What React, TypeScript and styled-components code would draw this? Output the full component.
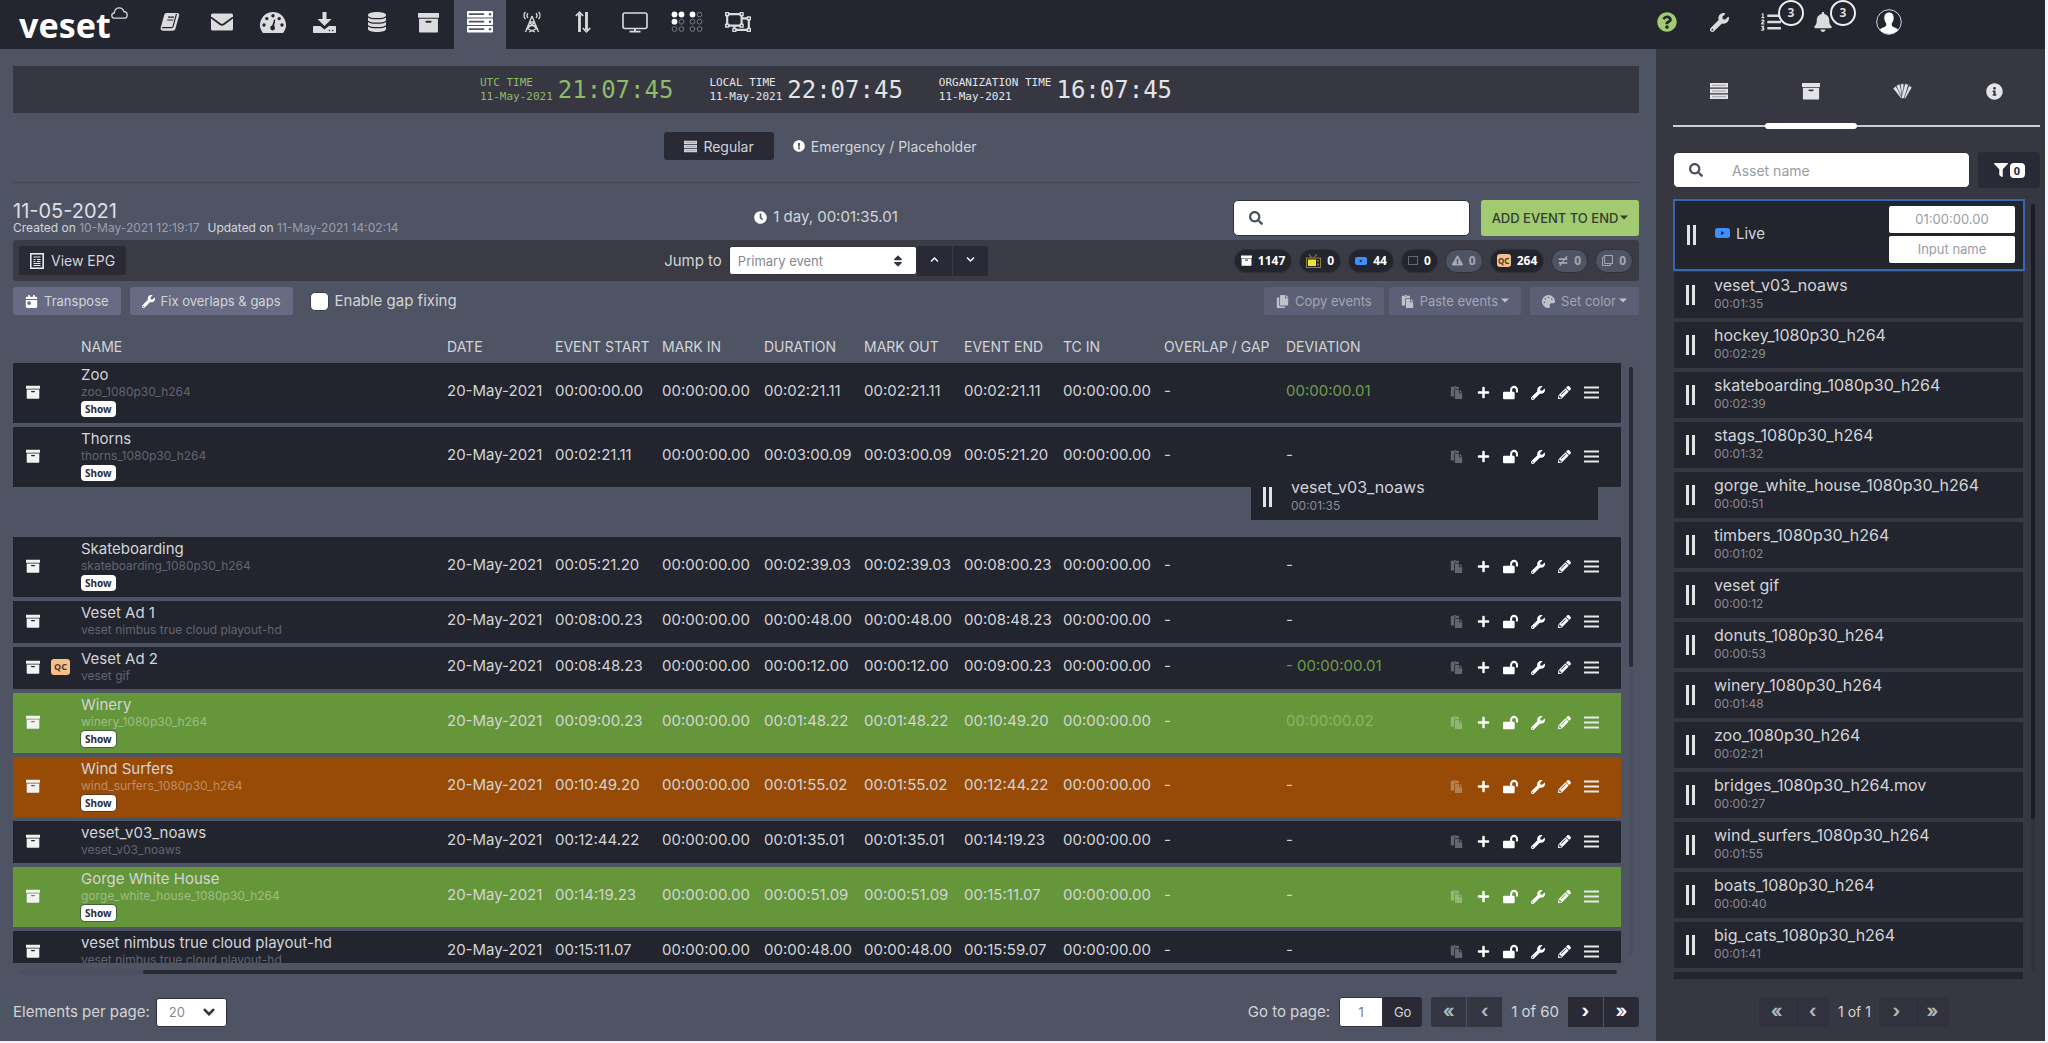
import React from "react";
import styled, { createGlobalStyle, css } from "styled-components";
import {
  FaBell, FaCalendarDay, FaChevronDown, FaChevronUp, FaClock, FaCopy,
  FaExclamationCircle, FaExclamationTriangle, FaFilter, FaInfoCircle, FaListOl, FaLockOpen,
  FaNotEqual, FaPalette, FaPaste, FaPencilAlt, FaPlus, FaQuestionCircle, FaRegClone,
  FaRegObjectUngroup, FaSearch, FaSort, FaWrench,
} from "react-icons/fa";

const sans = `Inter, "Liberation Sans", sans-serif`;
const mono = `"DejaVu Sans Mono", monospace`;

const c = {
  nav: "#23252f", page: "#4f5465", side: "#363741", row: "#22242e", bar: "#3b3b45",
  dark: "#292a36", soft: "#676b84", softOff: "#5c6077", text: "#d3d4d8", muted: "#9a9eab",
  lime: "#a1ca71", green: "#65963a", orange: "#974b06",
};

const Global = createGlobalStyle`
  * { box-sizing: border-box; }
  body { margin: 0; background: #f4f4f7; font-family: ${sans}; color: ${c.text}; }
  button, input, select { font: inherit; color: inherit; margin: 0; }
  button { border: 0; background: none; padding: 0; cursor: pointer; }
  ul { list-style: none; margin: 0; padding: 0; }
  svg { flex: none; display: block; }
`;

/* ---------- icons ---------- */

const BookIcon = () => (
  <svg width="20" height="20" viewBox="0 0 20 20">
    <path fill="currentColor" d="M6.5 1h10.6c1.4 0 2.4 1.2 2 2.6l-3.6 13c-.4 1.4-1.4 2.2-2.8 2.2H3.2C1.2 18.800.2 17 .8 15.200L4.300 2.800C4.600 1.700 5.400 1 6.500 1Z" />
    <path fill="none" stroke={c.nav} strokeWidth="1.200" d="M2 15.700h9.600c.8 0 1.200-.3 1.400-1L16.500 1.800M8 5.200h6M7.200 8h6" />
  </svg>
);
const MailIcon = () => (
  <svg width="22" height="18" viewBox="0 0 22 18">
    <rect width="22" height="17" y=".5" rx="1.500" fill="currentColor" />
    <path fill="none" stroke={c.nav} strokeWidth="1.800" d="M0 4.500 9.300 11.300c1.100.8 2.300.8 3.400 0L22 4.500" />
  </svg>
);
const GaugeIcon = () => (
  <svg width="26" height="21" viewBox="0 0 26 21">
    <path fill="currentColor" d="M13 0a13 13 0 0 0-10.700 20.300c.2.400.6.700 1.100.7h19.200c.5 0 .9-.3 1.100-.7A13 13 0 0 0 13 0Z" />
    <g fill={c.nav}>
      <circle cx="4" cy="13" r="1.700" /><circle cx="6.800" cy="6.600" r="1.700" /><circle cx="13" cy="3.800" r="1.700" />
      <circle cx="19.200" cy="6.600" r="1.700" /><circle cx="22" cy="13" r="1.700" /><circle cx="12.600" cy="16" r="2.400" />
      <path d="M14.100 7.500 15.400 7.800 13.800 15.500 11.800 15Z" />
    </g>
  </svg>
);
const DownloadIcon = () => (
  <svg width="23" height="22" viewBox="0 0 23 22">
    <g fill="currentColor"><path d="M9.500 1h4v7h5l-7 7-7-7h5Z" /><path d="M1 15h6.200l4.300 3.500 4.300-3.500H22c.6 0 1 .4 1 1v5c0 .6-.4 1-1 1H1c-.6 0-1-.4-1-1v-5c0-.6.4-1 1-1Z" /></g>
    <g fill={c.nav}><circle cx="16.500" cy="19.500" r=".8" /><circle cx="19.800" cy="19.500" r=".8" /></g>
  </svg>
);
const DatabaseIcon = () => (
  <svg width="18" height="20" viewBox="0 0 18 20">
    <path fill="currentColor" d="M0 3C0 1 4 0 9 0s9 1 9 3v14c0 2-4 3-9 3s-9-1-9-3Z" />
    <path fill="none" stroke={c.nav} strokeWidth="1.300" d="M0 4.500c1 1.700 5 2.200 9 2.200s8-.5 9-2.200M0 9c1 1.700 5 2.200 9 2.200s8-.5 9-2.200M0 13.500c1 1.700 5 2.200 9 2.200s8-.5 9-2.200" />
  </svg>
);
const BoxIcon = ({ size = 15, line = c.row }: { size?: number; line?: string }) => (
  <svg width={size} height={size} viewBox="0 0 20 20">
    <path fill="currentColor" d="M0 1h20v4.500H0zM1 6.500h18V18.500c0 .6-.4 1-1 1H2c-.6 0-1-.4-1-1Z" />
    <path d="M8 9.300h4" stroke={line} strokeWidth="1.800" strokeLinecap="round" />
  </svg>
);
const RackIcon = ({ slot = c.page }: { slot?: string }) => (
  <svg width="26" height="22" viewBox="0 0 26 22">
    {[0, 7.500, 15].map((y) => (
      <g key={y}>
        <rect y={y} width="26" height="6.500" rx=".8" fill="#fff" />
        <path d={`M2.500 ${y + 3.200}h14`} stroke={slot} strokeWidth="1.800" strokeLinecap="round" />
        <circle cx="23" cy={y + 3.200} r="1.200" fill={slot} />
      </g>
    ))}
  </svg>
);
const StackIcon = ({ w = 13 }: { w?: number }) => (
  <svg width={w} height={w} viewBox="0 0 18 16">
    <path fill="currentColor" d="M0 0h18v4.500H0zM0 5.700h18v4.600H0zM0 11.500h18V16H0z" />
    <path stroke={c.side} strokeWidth=".8" opacity=".5" d="M2 2.300h14M2 8h14M2 13.700h14" />
  </svg>
);
const TowerIcon = () => (
  <svg width="18" height="22" viewBox="0 0 18 22" fill="none" stroke="currentColor" strokeWidth="1.300">
    <path d="M9 5 2.500 21M9 5l6.500 16M7 11h4M5.500 14.500h7M11.500 11.500 4.300 17.500M6.500 11.500l7.200 6M4 17.500 12 21M14 17.500 6 21" />
    <path d="M2.500 1C.5 3 .5 6 2.500 8M5 2.200c-1.200 1.300-1.200 3.400 0 4.700M15.500 1c2 2 2 5 0 7M13 2.200c1.200 1.300 1.200 3.400 0 4.700" />
  </svg>
);
const SwapIcon = () => (
  <svg width="16" height="22" viewBox="0 0 16 22" fill="none" stroke="currentColor">
    <path strokeWidth="2.800" d="M4.500 3v18M11.500 1v18" /><path strokeWidth="1.600" d="M.8 5 4.500 1.200 8.200 5M7.800 17l3.700 3.800 3.700-3.800" />
  </svg>
);
const MonitorIcon = () => (
  <svg width="26" height="21" viewBox="0 0 26 21" fill="none" stroke="currentColor">
    <rect x="1" y="1" width="24" height="15.500" rx="2" strokeWidth="1.600" />
    <path strokeWidth="1.800" d="M13 16.500V19M7.500 19.600h11" />
  </svg>
);
const BrailleIcon = () => (
  <svg width="32" height="22" viewBox="0 0 32 22">
    {[3.500, 10.500, 21.500, 28.500].map((x, col) =>
      [3.500, 10.700, 18].map((y, row) => {
        const on = (row === 0 && col < 3) || (row === 1 && col === 0);
        return <circle key={`${x}-${y}`} cx={x} cy={y} r={on ? 2.900 : 2.400} fill={on ? "#fff" : "none"} stroke={on ? "none" : "#777982"} strokeWidth="1" />;
      })
    )}
  </svg>
);
const AvatarIcon = () => (
  <svg width="26" height="26" viewBox="0 0 26 26">
    <circle cx="13" cy="13" r="12.300" fill={c.nav} stroke="#d8d8dc" strokeWidth="1" />
    <path fill="#fff" d="M13 3.500c3 0 4.700 2.200 4.700 5.300 0 2.600-.9 4.300-1.900 5.400v2.300c.6 1.800 4.500 1.900 6.400 4.200a12 12 0 0 1-18.400 0c1.900-2.300 5.800-2.400 6.400-4.200v-2.300c-1-1.100-1.900-2.800-1.900-5.400 0-3.100 1.700-5.300 4.700-5.300Z" />
  </svg>
);
const CloudIcon = () => (
  <svg width="17" height="12" viewBox="0 0 17 12" fill="none" stroke="#d5d5da" strokeWidth="1.300">
    <path d="M4 11.200C1.900 11.200.8 9.900.8 8.500c0-1.500 1.200-2.400 2.500-2.500C3.500 2.500 6 .8 8.300.8c2.400 0 3.900 1.500 4.500 3.700 2 .2 3.400 1.600 3.400 3.400 0 1.900-1.400 3.300-3.300 3.300Z" />
  </svg>
);
const SwatchIcon = () => (
  <svg width="19" height="16" viewBox="0 0 19 16">
    <g fill="currentColor" stroke={c.side} strokeWidth=".6">
      <path d="M0 5.500 2.800 3 10 13.500 8 15.500Z" />
      <path d="M3.200 2.800 6.500.8 10.500 12 8.500 14Z" />
      <path d="M7.300 1 10.800.5 11 12 9 14Z" />
      <path d="M12 .5 15.500 1.500 11.500 15.500 8 15.500Z" />
      <path d="M16 2.500 19 4.300 12.500 15.500 11 15Z" />
    </g>
  </svg>
);
const TvIcon = () => (
  <svg width="15" height="14" viewBox="0 0 15 14" fill="none">
    <path stroke="#a39a35" d="m3 0 2.500 3.500M11 0 8 3.500" /><rect x=".5" y="4" width="14" height="9.500" stroke="#8d8431" />
    <path fill="#f5de3b" d="M2 5.500h8v6.500H2z" /><path stroke="#d5c53a" d="M12 6v1.500M12 9.500v2" />
  </svg>
);
const PlayIcon = ({ w = 15 }: { w?: number }) => (
  <svg width={w} height={(w * 10) / 15} viewBox="0 0 15 10"><rect width="15" height="10" rx="2.500" fill="#3f8efb" /><path fill={c.row} d="m6 3 3.500 2L6 7Z" /></svg>
);
const FrameIcon = () => (
  <svg width="10" height="9" viewBox="0 0 10 9"><rect x=".5" y=".5" width="9" height="8" fill="none" stroke="#666872" /></svg>
);
const EpgIcon = () => (
  <svg width="14" height="16" viewBox="0 0 14 16" fill="none" stroke="#e8e8ea">
    <rect x=".8" y=".8" width="12.400" height="14.400" strokeWidth="1.600" /><path d="M3.500 4h7M3.500 6.500h2M7 6.500h3.500M7 8.500h3.500M3.500 8.500h2M3.500 10.500h7M3.500 12.500h7" />
  </svg>
);
const MenuIcon = () => (
  <svg width="15" height="13" viewBox="0 0 15 13"><path stroke="#e9e9ec" strokeWidth="2.200" d="M0 1.500h15M0 6.500h15M0 11.500h15" /></svg>
);
const ChevronIcon = () => (
  <svg width="12" height="8" viewBox="0 0 12 8"><path fill="none" stroke="#33343f" strokeWidth="2.600" d="m1 1.200 5 5 5-5" /></svg>
);
const Caret = () => (
  <svg width="8" height="6" viewBox="0 0 8 6"><path fill="currentColor" d="M0 .5h8L4 4.500Z" /></svg>
);

/* ---------- header ---------- */

const Shell = styled.div`
  height: 100vh; display: flex; flex-direction: column;
  padding: 0 3px 2px 0;
`;
const TopBar = styled.header`
  flex: none; height: 49px; background: ${c.nav}; display: flex; justify-content: space-between;
`;
const Brand = styled.a`
  width: 144px; padding-left: 19px; display: flex; align-items: flex-start;
  font: 700 34px/50px "Noto Sans", sans-serif; color: #fff; text-decoration: none;
  svg { margin-top: 7px; }
`;
const Nav = styled.nav`display: flex; width: 620px; color: #dcdcde;`;
const NavItem = styled.button<{ $on?: boolean }>`
  flex: 1; display: grid; place-items: center; padding-bottom: 5px;
  background: ${(p) => (p.$on ? c.page : "transparent")};
`;
const UserTools = styled.div`display: flex; align-items: flex-start; padding: 6px 116px 0 0; color: #dcdcde;`;
const Tool = styled.button<{ $w: number; $color?: string }>`
  position: relative; width: ${(p) => p.$w}px; height: 32px; display: grid; place-items: center;
  color: ${(p) => p.$color || "inherit"};
`;
const Count = styled.span`
  position: absolute; left: 50%; top: -6px; margin-left: 7px; width: 26px; height: 26px; border: 2px solid #eee;
  border-radius: 50%; background: ${c.nav}; font: 700 12px/22px "Noto Sans", sans-serif; text-align: center;
`;

/* ---------- main ---------- */

const Body = styled.div`flex: 1; min-height: 0; display: grid; grid-template-columns: minmax(0, 1fr) 389px;`;
const Main = styled.main`
  background: ${c.page}; padding: 17px 17px 14px 13px; min-height: 0; display: flex; flex-direction: column;
`;
const Clocks = styled.section`
  flex: none; height: 47px; background: ${c.side}; display: flex; justify-content: center; align-items: center; gap: 36px;
  font-family: ${mono};
`;
const Clock = styled.div<{ $utc?: boolean }>`
  display: flex; align-items: center; gap: 5px; color: ${(p) => (p.$utc ? "#8dbb66" : "#e4e4e6")};
`;
const ClockLabel = styled.span`font-size: 11px; line-height: 14px;`;
const ClockTime = styled.time`font-size: 24px; line-height: 28px;`;
const Modes = styled.div`display: flex; justify-content: center; gap: 8px; margin: 19px 0 22px;`;
const Mode = styled.button<{ $on?: boolean }>`
  height: 28px; padding: 0 ${(p) => (p.$on ? 20 : 11)}px; border-radius: 3px; display: flex; align-items: center; gap: 6px; font-size: 14px;
  background: ${(p) => (p.$on ? c.dark : "transparent")};
`;
const Head = styled.section`
  flex: none; border-top: 1px solid #434654; padding-top: 17px; display: grid; height: 58px;
  grid-template-columns: 1fr auto 1fr; align-items: start;
`;
const Title = styled.h1`margin: 0; font-size: 20px; font-weight: 400; line-height: 22px; color: #dedfe2;`;
const Meta = styled.p`margin: 0; font-size: 12px; line-height: 12px; color: ${c.text};`;
const MetaItem = styled.span`margin-right: 8px; color: ${c.muted};`;
const Total = styled.div`display: flex; align-items: center; gap: 6px; font-size: 15px; line-height: 34px; svg { color: #fff; }`;
const HeadTools = styled.div`display: flex; justify-content: flex-end; gap: 11px;`;
const SearchBox = styled.label<{ $w?: number }>`
  ${(p) => (p.$w ? `width: ${p.$w}px;` : "flex: 1;")} height: 36px; background: #fff; border: 1px solid #2f303b; border-radius: 5px;
  display: flex; align-items: center; padding-left: 15px; gap: 27px; color: #4b505f;
  input { flex: 1; min-width: 0; border: 0; outline: 0; background: none; font-size: 14px; }
  input::placeholder { color: #999ca5; }
`;
const AddButton = styled.button`
  height: 36px; width: 158px; border-radius: 3px; background: ${c.lime}; color: #333d2c; font-size: 13px; font-weight: 500;
  display: flex; align-items: center; justify-content: center; gap: 2px; white-space: nowrap;
`;
const Bar = styled.section`
  flex: none; height: 41px; margin-bottom: 6px; padding: 0 6px; background: ${c.bar}; border-radius: 4px;
  display: grid; grid-template-columns: 1fr auto 1fr; align-items: center;
`;
const DarkButton = styled.button`
  justify-self: start; height: 29px; padding: 0 11px; border-radius: 3px; background: ${c.dark}; font-size: 14px;
  display: flex; align-items: center; gap: 7px;
`;
const Jump = styled.div`display: flex; align-items: center; font-size: 15px; label { margin-right: 7px; }`;
const SelectWrap = styled.span<{ $w: number; $left: number }>`
  position: relative; width: ${(p) => p.$w}px; height: 29px; display: block;
  select {
    appearance: none; width: 100%; height: 100%; background: #fff; color: #858893; border: 1px solid #2f303b;
    border-radius: 3px; font-size: 13px; padding: 0 0 0 ${(p) => p.$left}px; outline: 0;
  }
  svg { position: absolute; right: 12px; top: 50%; transform: translateY(-50%); color: #33343f; pointer-events: none; }
`;
const Steps = styled.div`display: flex; gap: 1px;`;
const Step = styled.button<{ $off?: boolean; $first?: boolean; $last?: boolean }>`
  width: 35px; height: 30px; background: ${(p) => (p.$off ? "#343642" : c.dark)}; color: ${(p) => (p.$off ? "#b4b5bc" : "#fff")};
  display: grid; place-items: center; font: 700 18px/20px ${sans}; padding-bottom: 2px;
  border-radius: ${(p) => (p.$first ? "3px 0 0 3px" : p.$last ? "0 3px 3px 0" : "0")};
`;
const Badges = styled.div`display: flex; justify-content: flex-end; gap: 7px;`;
const Badge = styled.span<{ $off?: boolean }>`
  height: 24px; padding: 0 6px; border-radius: 12px; display: flex; align-items: center; gap: 6px;
  background: ${(p) => (p.$off ? c.page : c.row)}; color: ${(p) => (p.$off ? "#a4a8b4" : "#fff")};
  border: 1px solid #303139; font: 700 12px/22px "Noto Sans", sans-serif;
`;
const Qc = styled.span<{ $small?: boolean }>`
  height: ${(p) => (p.$small ? 13 : 16)}px; width: ${(p) => (p.$small ? 14 : 19)}px; border-radius: 3px; background: #f9bf88; color: #4a3a2e;
  font: 700 ${(p) => (p.$small ? 8 : 9)}px/14px "Noto Sans", sans-serif; display: grid; place-items: center;
`;
const Actions = styled.section`flex: none; display: flex; align-items: center; gap: 9px; height: 28px; margin-bottom: 4px;`;
const ButtonPair = styled.div`display: flex; gap: 5px;`;
const SoftButton = styled.button<{ $off?: boolean }>`
  height: 28px; padding: 0 12px; border-radius: 3px; display: flex; align-items: center; gap: 6px; font-size: 13px; white-space: nowrap;
  background: ${(p) => (p.$off ? c.softOff : c.soft)}; color: ${(p) => (p.$off ? "#a3a6b4" : c.text)};
  > svg { color: ${(p) => (p.$off ? "#c0c2cb" : "#fff")}; }
  > svg + svg, > span + svg { margin-left: 0; }
`;
const WithCaret = styled.span`display: flex; align-items: center; gap: 3px; svg { color: #c0c2cb; }`;
const CheckLabel = styled.label`
  display: flex; align-items: center; gap: 6px; margin: 0 auto 0 8px; font-size: 15px; line-height: 18px;
  input { appearance: none; width: 19px; height: 19px; background: #fff; border: 1px solid #3a3c49; border-radius: 5px; }
`;

/* ---------- events ---------- */

const Viewport = styled.div`flex: 1; min-height: 0; display: flex;`;
const Scroller = styled.div`flex: 1; min-width: 0; overflow: hidden; position: relative;`;
const VRail = styled.div`width: 18px; padding: 48px 0 8px 8px; display: flex;`;
const VTrack = styled.div`width: 4px; background: #4b4f60; span { display: block; height: 51%; border-radius: 2px; background: #282a34; }`;
const HTrack = styled.div`
  flex: none; margin: 7px 22px 23px 7px; height: 4px; background: #4b4f5f;
  span { display: block; height: 4px; margin-left: 123px; border-radius: 2px; background: #282a34; }
`;
const Table = styled.table`
  width: 100%; table-layout: fixed; border-collapse: separate; border-spacing: 0 4px; font-size: 15px;
  th { height: 36px; padding: 10px 0 0; text-align: left; font-size: 14px; font-weight: 400; white-space: nowrap; color: ${c.text}; }
  td { padding: 0 0 5px; white-space: nowrap; }
`;
const rowTone = { dark: c.row, green: c.green, orange: c.orange };
type Tone = keyof typeof rowTone;
const Row = styled.tr<{ $tone: Tone }>`background: ${(p) => rowTone[p.$tone]};`;
const Spacer = styled.tr`height: 42px;`;
const Marks = styled.div`display: flex; align-items: center; gap: 11px; padding: 3px 0 0 13px; color: #f2f2f2;`;
const NameCell = styled.td`&& { padding: 4px 0 5px; vertical-align: top; }`;
const Name = styled.div`line-height: 16px;`;
const File = styled.div<{ $tone: Tone }>`
  font-size: 12px; line-height: 17px; color: ${(p) => (p.$tone === "dark" ? "#62646e" : "rgba(255,255,255,.38)")};
`;
const Show = styled.button`
  display: block; margin: 1px 0; height: 16px; padding: 0 4px; border-radius: 4px; background: #fff; color: #2a2b36;
  box-shadow: 0 0 0 1px rgba(40, 42, 52, .5);
  font: 700 10px/16px "Noto Sans", sans-serif;
`;
const Deviation = styled.span<{ $tone: Tone }>`color: ${(p) => (p.$tone === "dark" ? "#6f9d4b" : "#8db465")};`;
const RowTools = styled.div`display: flex; color: #fff; padding-top: 4px;`;
const RowTool = styled.button<{ $off?: boolean }>`
  width: 27px; height: 20px; display: grid; place-items: center; opacity: ${(p) => (p.$off ? 0.3 : 1)};
`;

const Foot = styled.footer`flex: none; height: 30px; display: flex; align-items: center; font-size: 15px; gap: 6px;`;
const FootText = styled.span`padding-bottom: 2px;`;
const Push = styled.div`margin-left: auto; display: flex; align-items: center; gap: 9px;`;
const PageInput = styled.input`
  width: 44px; height: 30px; border: 1px solid #2f303b; border-radius: 3px 0 0 3px; background: #fff; text-align: center; font-size: 13px;
  && { color: #777a85; }
`;
const Go = styled.button`width: 39px; height: 30px; background: ${c.dark}; border-radius: 0 3px 3px 0; font-size: 13px;`;
const Group = styled.div`display: flex;`;

/* ---------- sidebar ---------- */

const Side = styled.aside`
  background: ${c.side}; min-height: 0; padding: 0 5px 14px 17px; display: flex; flex-direction: column;
`;
const SideTabs = styled.div`
  flex: none; height: 78px; margin-bottom: 25px; display: grid; grid-template-columns: repeat(4, 1fr); border-bottom: 2px solid #cfcfd3;
`;
const SideTab = styled.button<{ $on?: boolean }>`
  position: relative; display: grid; place-items: center; padding-top: 8px; color: #e4e4e8;
  ${(p) => p.$on && css`&::after { content: ""; position: absolute; left: 0; right: 0; bottom: -4px; height: 6px; border-radius: 3px; background: #fff; }`}
`;
const SideSearch = styled.div`flex: none; display: flex; gap: 8px; margin-bottom: 11px;`;
const FilterButton = styled.button`
  width: 62px; height: 36px; border-radius: 4px; background: ${c.dark}; color: #fff; display: flex; align-items: center; justify-content: center; gap: 2px;
  span { width: 15px; height: 15px; border-radius: 4px; background: #fff; color: #2a2b36; font: 700 11px/15px "Noto Sans", sans-serif; }
`;
const AssetArea = styled.div`flex: 1; min-height: 0; display: flex; gap: 6px;`;
const AssetList = styled.ul`flex: 1; min-width: 0; overflow: hidden; display: flex; flex-direction: column;`;
const SideRail = styled.div`width: 4px; margin: 5px 5px 6px 0; background: #32333d; span { display: block; height: 80%; border-radius: 2px; background: #1b1c25; }`;
const assetBox = css`flex: none; height: 46px; background: ${c.row}; display: flex; align-items: center; padding-left: 12px; gap: 19px;`;
const Asset = styled.li`${assetBox} margin: 0 2px 4px 1px;`;
const Grip = styled.span`width: 9px; height: 20px; border: solid #e3e3e6; border-width: 0 3px;`;
const AssetName = styled.div`font-size: 16px; line-height: 18px;`;
const AssetTime = styled.div`font-size: 12px; line-height: 20px; color: #8a8c95;`;
const Live = styled.li`
  flex: none; height: 72px; margin-bottom: 1px; border: 2px solid #3668ab; background: ${c.row}; display: flex; align-items: center;
  padding: 0 8px 0 12px; gap: 19px; font-size: 15px;
`;
const LiveName = styled.div`display: flex; align-items: center; gap: 6px; flex: 1; padding-bottom: 4px;`;
const LiveFields = styled.div`
  width: 126px; display: grid; gap: 3px; margin-bottom: 2px;
  input { width: 100%; height: 27px; border: 0; border-radius: 2px; background: #fff; text-align: center; font-size: 13px; }
  input::placeholder { color: #9b9da6; }
`;
const Dragged = styled.div`${assetBox} position: absolute; right: 23px; top: 155px; width: 347px;`;
const SideFoot = styled.div`
  flex: none; height: 30px; margin: 18px 4px 0 0; display: flex; justify-content: center; align-items: center; gap: 8px; font-size: 14px;
  ${Step} { background: #31323d; }
`;

/* ---------- data ---------- */

const columns = ["NAME", "DATE", "EVENT START", "MARK IN", "DURATION", "MARK OUT", "EVENT END", "TC IN", "OVERLAP / GAP", "DEVIATION"];
const widths = [108, 107, 102, 100, 100, 99, 101, 122, 157, 178];

type Event = { name: string; file: string; start: string; dur: string; end: string; dev?: string; show?: boolean; qc?: boolean; tone?: Tone };
const before: Event[] = [
  { name: "Zoo", file: "zoo_1080p30_h264", start: "00:00:00.00", dur: "00:02:21.11", end: "00:02:21.11", dev: "00:00:00.01", show: true },
  { name: "Thorns", file: "thorns_1080p30_h264", start: "00:02:21.11", dur: "00:03:00.09", end: "00:05:21.20", show: true },
];
const after: Event[] = [
  { name: "Skateboarding", file: "skateboarding_1080p30_h264", start: "00:05:21.20", dur: "00:02:39.03", end: "00:08:00.23", show: true },
  { name: "Veset Ad 1", file: "veset nimbus true cloud playout-hd", start: "00:08:00.23", dur: "00:00:48.00", end: "00:08:48.23" },
  { name: "Veset Ad 2", file: "veset gif", start: "00:08:48.23", dur: "00:00:12.00", end: "00:09:00.23", dev: "- 00:00:00.01", qc: true },
  { name: "Winery", file: "winery_1080p30_h264", start: "00:09:00.23", dur: "00:01:48.22", end: "00:10:49.20", dev: "00:00:00.02", show: true, tone: "green" },
  { name: "Wind Surfers", file: "wind_surfers_1080p30_h264", start: "00:10:49.20", dur: "00:01:55.02", end: "00:12:44.22", show: true, tone: "orange" },
  { name: "veset_v03_noaws", file: "veset_v03_noaws", start: "00:12:44.22", dur: "00:01:35.01", end: "00:14:19.23" },
  { name: "Gorge White House", file: "gorge_white_house_1080p30_h264", start: "00:14:19.23", dur: "00:00:51.09", end: "00:15:11.07", show: true, tone: "green" },
  { name: "veset nimbus true cloud playout-hd", file: "veset nimbus true cloud playout-hd", start: "00:15:11.07", dur: "00:00:48.00", end: "00:15:59.07" },
];
const assets = [
  ["veset_v03_noaws", "00:01:35"], ["hockey_1080p30_h264", "00:02:29"], ["skateboarding_1080p30_h264", "00:02:39"],
  ["stags_1080p30_h264", "00:01:32"], ["gorge_white_house_1080p30_h264", "00:00:51"], ["timbers_1080p30_h264", "00:01:02"],
  ["veset gif", "00:00:12"], ["donuts_1080p30_h264", "00:00:53"], ["winery_1080p30_h264", "00:01:48"], ["zoo_1080p30_h264", "00:02:21"],
  ["bridges_1080p30_h264.mov", "00:00:27"], ["wind_surfers_1080p30_h264", "00:01:55"], ["boats_1080p30_h264", "00:00:40"],
  ["big_cats_1080p30_h264", "00:01:41"],
];
const navItems = [
  ["Catalogue", <BookIcon />], ["Messages", <MailIcon />], ["Dashboard", <GaugeIcon />], ["Downloads", <DownloadIcon />],
  ["Storage", <DatabaseIcon />], ["Assets", <BoxIcon size={21} line={c.nav} />], ["Playlists", <RackIcon />], ["Channels", <TowerIcon />],
  ["Transfers", <SwapIcon />], ["Monitoring", <MonitorIcon />], ["Matrix", <BrailleIcon />], ["Graphics", <FaRegObjectUngroup size={26} />],
] as [string, React.ReactNode][];

const EventRow = ({ e }: { e: Event }) => {
  const tone = e.tone || "dark";
  return (
    <Row $tone={tone}>
      <td><Marks><BoxIcon size={14} line={rowTone[tone]} />{e.qc && <Qc>QC</Qc>}</Marks></td>
      <NameCell>
        <Name>{e.name}</Name>
        <File $tone={tone}>{e.file}</File>
        {e.show && <Show>Show</Show>}
      </NameCell>
      <td>20-May-2021</td><td>{e.start}</td><td>00:00:00.00</td><td>{e.dur}</td><td>{e.dur}</td><td>{e.end}</td><td>00:00:00.00</td>
      <td>-</td>
      <td>{e.dev ? <Deviation $tone={tone}>{e.dev}</Deviation> : "-"}</td>
      <td>
        <RowTools>
          <RowTool $off aria-label="Paste"><FaPaste size={13} /></RowTool>
          <RowTool aria-label="Add"><FaPlus size={13} /></RowTool>
          <RowTool aria-label="Unlock"><FaLockOpen size={15} /></RowTool>
          <RowTool aria-label="Settings"><FaWrench size={14} /></RowTool>
          <RowTool aria-label="Edit"><FaPencilAlt size={13} /></RowTool>
          <RowTool aria-label="Menu"><MenuIcon /></RowTool>
        </RowTools>
      </td>
    </Row>
  );
};

export default function App() {
  return (
    <Shell>
      <Global />
      <TopBar>
        <Group>
          <Brand href="#">veset<CloudIcon /></Brand>
          <Nav>
            {navItems.map(([label, icon]) => (
              <NavItem key={label} aria-label={label} $on={label === "Playlists"}>{icon}</NavItem>
            ))}
          </Nav>
        </Group>
        <UserTools>
          <Tool $w={52} $color={c.lime} aria-label="Help"><FaQuestionCircle size={20} /></Tool>
          <Tool $w={52} aria-label="Tools"><FaWrench size={19} /></Tool>
          <Tool $w={52} aria-label="Tasks"><FaListOl size={20} /><Count>3</Count></Tool>
          <Tool $w={52} aria-label="Notifications"><FaBell size={20} /><Count>3</Count></Tool>
          <Tool $w={80} aria-label="Account"><AvatarIcon /></Tool>
        </UserTools>
      </TopBar>

      <Body>
        <Main>
          <Clocks>
            <Clock $utc><ClockLabel>UTC TIME<br />11-May-2021</ClockLabel><ClockTime>21:07:45</ClockTime></Clock>
            <Clock><ClockLabel>LOCAL TIME<br />11-May-2021</ClockLabel><ClockTime>22:07:45</ClockTime></Clock>
            <Clock><ClockLabel>ORGANIZATION TIME<br />11-May-2021</ClockLabel><ClockTime>16:07:45</ClockTime></Clock>
          </Clocks>
          <Modes>
            <Mode $on><StackIcon />Regular</Mode>
            <Mode><FaExclamationCircle size={12} color="#fff" />Emergency / Placeholder</Mode>
          </Modes>

          <Head>
            <div>
              <Title>11-05-2021</Title>
              <Meta>
                Created on <MetaItem>10-May-2021 12:19:17</MetaItem>
                Updated on <MetaItem>11-May-2021 14:02:14</MetaItem>
              </Meta>
            </div>
            <Total><FaClock size={13} />1 day, 00:01:35.01</Total>
            <HeadTools>
              <SearchBox $w={237}><FaSearch size={14} /><input aria-label="Search events" /></SearchBox>
              <AddButton>ADD EVENT TO END<Caret /></AddButton>
            </HeadTools>
          </Head>

          <Bar>
            <DarkButton><EpgIcon />View EPG</DarkButton>
            <Jump>
              <label htmlFor="jump">Jump to</label>
              <SelectWrap $w={188} $left={8}><select id="jump"><option>Primary event</option></select><FaSort size={14} /></SelectWrap>
              <Steps>
                <Step aria-label="Previous"><FaChevronUp size={9} /></Step>
                <Step $last aria-label="Next"><FaChevronDown size={9} /></Step>
              </Steps>
            </Jump>
            <Badges>
              <Badge><BoxIcon size={11} />1147</Badge>
              <Badge><TvIcon />0</Badge>
              <Badge><PlayIcon w={12} />44</Badge>
              <Badge><FrameIcon />0</Badge>
              <Badge $off><FaExclamationTriangle size={11} />0</Badge>
              <Badge><Qc $small>QC</Qc>264</Badge>
              <Badge $off><FaNotEqual size={10} />0</Badge>
              <Badge $off><FaRegClone size={11} />0</Badge>
            </Badges>
          </Bar>

          <Actions>
            <SoftButton><FaCalendarDay size={13} />Transpose</SoftButton>
            <SoftButton><FaWrench size={13} />Fix overlaps &amp; gaps</SoftButton>
            <CheckLabel><input type="checkbox" />Enable gap fixing</CheckLabel>
            <ButtonPair>
              <SoftButton $off><FaCopy size={13} />Copy events</SoftButton>
              <SoftButton $off><FaPaste size={13} /><WithCaret>Paste events<Caret /></WithCaret></SoftButton>
            </ButtonPair>
            <SoftButton $off><FaPalette size={13} /><WithCaret>Set color<Caret /></WithCaret></SoftButton>
          </Actions>

          <Viewport>
            <Scroller>
              <Table>
                <colgroup>
                  <col style={{ width: 68 }} /><col />
                  {widths.map((w, i) => <col key={i} style={{ width: w }} />)}
                </colgroup>
                <thead><tr><th />{columns.map((h) => <th key={h}>{h}</th>)}<th /></tr></thead>
                <tbody>
                  {before.map((e) => <EventRow key={e.start} e={e} />)}
                  <Spacer><td colSpan={12} /></Spacer>
                  {after.map((e) => <EventRow key={e.start} e={e} />)}
                </tbody>
              </Table>
              <Dragged><Grip /><div><AssetName>veset_v03_noaws</AssetName><AssetTime>00:01:35</AssetTime></div></Dragged>
            </Scroller>
            <VRail><VTrack><span /></VTrack></VRail>
          </Viewport>
          <HTrack><span /></HTrack>

          <Foot>
            <FootText as="label" htmlFor="per-page">Elements per page:</FootText>
            <SelectWrap $w={71} $left={12}><select id="per-page"><option>20</option></select><ChevronIcon /></SelectWrap>
            <Push>
              <FootText as="label" htmlFor="page">Go to page:</FootText>
              <Group><PageInput id="page" defaultValue="1" /><Go>Go</Go></Group>
              <Steps><Step $off $first aria-label="First">«</Step><Step $off aria-label="Previous page">‹</Step></Steps>
              <FootText>1 of 60</FootText>
              <Steps><Step aria-label="Next page">›</Step><Step $last aria-label="Last">»</Step></Steps>
            </Push>
          </Foot>
        </Main>

        <Side>
          <SideTabs>
            <SideTab aria-label="Playlist"><StackIcon w={18} /></SideTab>
            <SideTab $on aria-label="Assets"><BoxIcon size={18} line={c.side} /></SideTab>
            <SideTab aria-label="Graphics"><SwatchIcon /></SideTab>
            <SideTab aria-label="Info"><FaInfoCircle size={17} /></SideTab>
          </SideTabs>
          <SideSearch>
            <SearchBox><FaSearch size={14} /><input aria-label="Asset name" placeholder="Asset name" /></SearchBox>
            <FilterButton aria-label="Filter"><FaFilter size={14} /><span>0</span></FilterButton>
          </SideSearch>
          <AssetArea>
            <AssetList>
              <Live>
                <Grip />
                <LiveName><PlayIcon />Live</LiveName>
                <LiveFields>
                  <input aria-label="Duration" placeholder="01:00:00.00" />
                  <input aria-label="Input name" placeholder="Input name" />
                </LiveFields>
              </Live>
              {assets.map(([n, t]) => (
                <Asset key={n}><Grip /><div><AssetName>{n}</AssetName><AssetTime>{t}</AssetTime></div></Asset>
              ))}
              <Asset />
            </AssetList>
            <SideRail><span /></SideRail>
          </AssetArea>
          <SideFoot>
            <Steps><Step $off $first aria-label="First">«</Step><Step $off aria-label="Previous page">‹</Step></Steps>
            <FootText>1 of 1</FootText>
            <Steps><Step $off aria-label="Next page">›</Step><Step $off $last aria-label="Last">»</Step></Steps>
          </SideFoot>
        </Side>
      </Body>
    </Shell>
  );
}
